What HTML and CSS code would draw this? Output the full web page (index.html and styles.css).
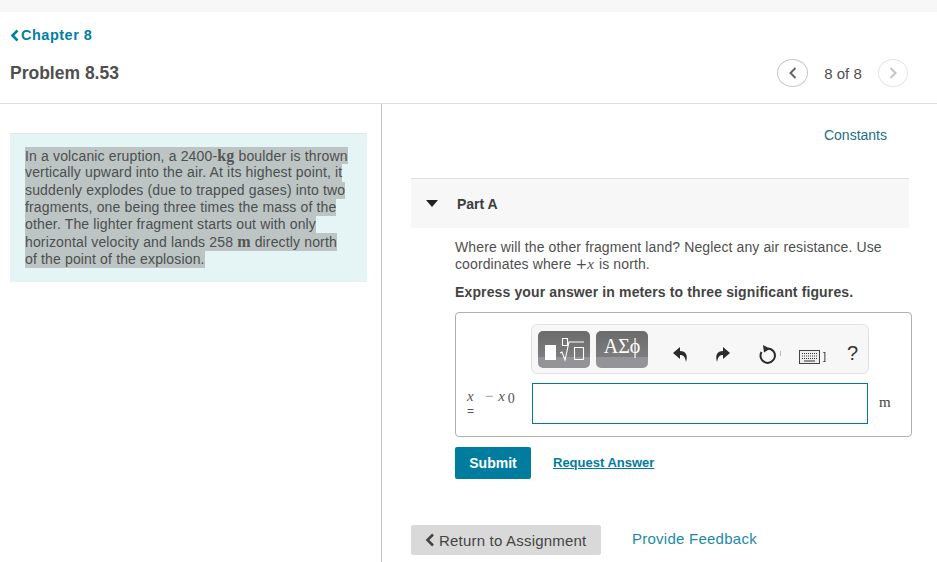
FILE: index.html
```html
<!DOCTYPE html>
<html lang="en">
<head>
<meta charset="utf-8">
<title>Problem 8.53</title>
<link rel="stylesheet" href="styles.css">
</head>
<body>
<div class="topstrip"></div>
<header class="header">
  <a class="chapter"><svg class="chev" width="9" height="13" viewBox="0 0 9 13"><path d="M7.5 1.500 2.500 6.500l5 5" fill="none" stroke="#00809f" stroke-width="2.600"/></svg>Chapter 8</a>
  <div class="titlerow">
    <h1 class="title">Problem 8.53</h1>
    <div class="pager">
      <span class="circle"><svg width="12" height="14" viewBox="0 0 12 14"><path d="M8.500 2 3.500 7l5 5" fill="none" stroke="#666" stroke-width="2"/></svg></span>
      <span class="pagetext">8 of 8</span>
      <span class="circle off"><svg width="12" height="14" viewBox="0 0 12 14"><path d="M3.500 2l5 5-5 5" fill="none" stroke="#c4c4c4" stroke-width="2"/></svg></span>
    </div>
  </div>
</header>
<main class="main">
  <section class="left">
    <div class="problem">
      <span class="hl">In a volcanic eruption, a 2400-<span class="unit">kg</span> boulder is thrown</span>
      <span class="hl">vertically upward into the air. At its highest point, it</span>
      <span class="hl">suddenly explodes (due to trapped gases) into two</span>
      <span class="hl">fragments, one being three times the mass of the</span>
      <span class="hl">other. The lighter fragment starts out with only</span>
      <span class="hl">horizontal velocity and lands 258 <span class="unit">m</span> directly north</span>
      <span class="hl">of the point of the explosion.</span>
    </div>
  </section>
  <section class="right">
    <div class="constants"><a>Constants</a></div>
    <div class="parthead">
      <svg class="tri" width="12" height="7" viewBox="0 0 12 7"><path d="M0 0h12L6 7z" fill="#222"/></svg>
      <span class="partname">Part A</span>
    </div>
    <div class="partbody">
      <p class="question">Where will the other fragment land? Neglect any air resistance. Use<br>coordinates where <span class="plusx"><span class="plus">+</span><span class="math">x</span></span> is north.</p>
      <p class="express">Express your answer in meters to three significant figures.</p>
      <div class="answerbox">
        <div class="toolbar">
          <span class="tbtn wide">
            <svg width="52" height="37" viewBox="0 0 52 37"><rect x="7" y="14" width="11" height="15" fill="#fff"/><path d="M24.500 7.500h5v7h-5zM22 22l2-1 3 8 4-18h15M36.500 16.500h9v12h-9z" fill="none" stroke="#fff" stroke-width="1.100"/></svg>
          </span>
          <span class="tbtn greek">ΑΣϕ</span>
          <svg class="ico undo" width="16" height="17" viewBox="0 0 16 17"><path d="M7 1 0 7l7 6V9c3 0 5 1 6 7 2-7 0-11-6-11z" fill="#2b2b2b"/></svg>
          <svg class="ico redo" width="16" height="17" viewBox="0 0 16 17"><path d="M9 1l7 6-7 6V9c-3 0-5 1-6 7-2-7 0-11 6-11z" fill="#2b2b2b"/></svg>
          <svg class="ico reset" width="20" height="20" viewBox="0 0 20 20"><path d="M11 3.500a7.200 7.200 0 1 1-6.500 3.600" fill="none" stroke="#2b2b2b" stroke-width="2"/><path d="M6 0l7 3.700-6 3.800z" fill="#2b2b2b"/></svg>
          <span class="tick"></span>
          <svg class="ico kbd" width="21" height="14" viewBox="0 0 21 14"><rect x=".5" y=".5" width="20" height="13" fill="#eee" stroke="#444"/><path d="M3 3.500h15M3 6h15M3 8.500h15" stroke="#333" stroke-dasharray="1 1"/><path d="M5 11h11" stroke="#333"/></svg>
          <span class="bracket">]</span>
          <span class="help">?</span>
        </div>
        <div class="inputrow">
          <div class="label"><span class="expr"><span class="math">x</span><span class="minus">−</span><span class="math">x</span><sub>0</sub></span><span class="eq">=</span></div>
          <div class="input"></div>
          <span class="inunit">m</span>
        </div>
      </div>
      <div class="actions">
        <button class="submit">Submit</button>
        <a class="request">Request Answer</a>
      </div>
    </div>
    <div class="footer">
      <button class="return"><svg width="10" height="14" viewBox="0 0 10 14"><path d="M8 1.500 2.500 7 8 12.500" fill="none" stroke="#444" stroke-width="2.600"/></svg>Return to Assignment</button>
      <a class="feedback">Provide Feedback</a>
    </div>
  </section>
</main>
</body>
</html>
```
FILE: styles.css
```css
* { box-sizing: border-box; }
html, body { margin: 0; padding: 0; }
body {
  width: 937px;
  height: 562px;
  overflow: hidden;
  background: #fff;
  font-family: "Liberation Sans", Arial, sans-serif;
  color: #4a4a4a;
}
p, h1 { margin: 0; }
.topstrip { height: 12px; background: #f7f7f7; }
.header {
  height: 92px;
  padding: 14px 29px 0 10px;
  border-bottom: 1px solid #dedede;
}
.chapter {
  display: flex;
  align-items: center;
  gap: 2px;
  height: 18px;
  font-size: 14.5px;
  font-weight: bold;
  letter-spacing: .5px;
  color: #00809f;
}
.titlerow {
  display: flex;
  justify-content: space-between;
  align-items: center;
  margin-top: 15px;
  height: 28px;
}
.title { font-size: 17.5px; font-weight: bold; color: #4f4f4f; }
.pager { display: flex; align-items: center; }
.circle {
  display: flex;
  align-items: center;
  justify-content: center;
  width: 31px;
  height: 28px;
  border: 1px solid #c8c8c8;
  border-radius: 50%;
}
.circle.off { width: 30px; border-color: #e6e6e6; }
.pagetext { font-size: 15px; width: 70px; text-align: center; color: #4f4f4f; }
.main { display: flex; height: 458px; }
.left {
  flex: none;
  width: 382px;
  padding: 29px 14px 0 10px;
  border-right: 1px solid #c9c9c9;
}
.problem {
  height: 149px;
  padding: 13px 14px 0 15px;
  background: #e5f5f6;
  border-top: 1px solid #dfe8e8;
  font-size: 14px;
  line-height: 17.3px;
  letter-spacing: .15px;
  color: #4c4f4f;
}
.hl {
  display: block;
  width: fit-content;
  height: 17.3px;
  white-space: nowrap;
  background: #bcc4c4;
}
.unit { font-family: "Liberation Serif", serif; font-size: 16px; font-weight: bold; color: #555; }
.right { flex: 1; min-width: 0; padding: 0 28px 0 29px; }
.constants {
  height: 74px;
  padding: 23px 22px 0 0;
  text-align: right;
  font-size: 14px;
  color: #1d6f87;
}
.parthead {
  display: flex;
  align-items: center;
  height: 50px;
  background: #f7f7f7;
  border-top: 1px solid #e0e0e0;
}
.tri { margin-left: 15px; }
.partname { margin-left: 19px; font-size: 14px; font-weight: bold; color: #3d3d3d; }
.partbody { padding: 11px 0 0 44px; margin-right: -3px; }
.question { font-size: 14px; line-height: 17px; letter-spacing: .12px; color: #4f4f4f; white-space: nowrap; }
.math { font-family: "Liberation Serif", serif; font-style: italic; font-size: 15px; letter-spacing: 1px; }
.plusx { display: inline-flex; align-items: baseline; line-height: 0; }
.plus { font-family: "DejaVu Serif", serif; font-size: 14px; }
.express {
  margin-top: 11px;
  font-size: 14px;
  line-height: 17px;
  font-weight: bold;
  letter-spacing: .13px;
  color: #444;
}
.answerbox {
  height: 125px;
  margin-top: 11px;
  padding: 11px 0 0 75px;
  border: 1px solid #b0b0b0;
  border-radius: 4px;
}
.toolbar {
  display: flex;
  align-items: center;
  width: 338px;
  height: 50px;
  padding: 0 6px;
  background: #f7f7f7;
  border: 1px solid #e2e2e2;
  border-radius: 6px;
}
.tbtn {
  display: flex;
  align-items: flex-start;
  height: 37px;
  border-radius: 5px;
  background: linear-gradient(#6b6b6b 0, #7d7d7d 70%, #939398 70%, #939398 100%);
  color: #fff;
}
.wide { width: 52px; margin-right: 6px; }
.greek {
  width: 52px;
  padding-top: 4px;
  justify-content: center;
  font-family: "Liberation Serif", serif;
  font-size: 20px;
}
.ico { flex: none; }
.undo { margin-left: 25px; margin-top: 11px; }
.redo { margin-left: 25px; margin-top: 11px; }
.reset { margin-left: 27px; margin-top: 12px; }
.tick { width: 1px; height: 5px; margin: 8px 0 0 3px; background: #bbb; }
.kbd { margin-left: 18px; margin-top: 16px; }
.bracket { margin-left: 3px; margin-top: 14px; font-size: 11px; color: #333; }
.help { margin-left: 21px; margin-top: 9px; font-size: 20px; color: #333; }
.inputrow { display: flex; align-items: flex-start; margin-top: 9px; }
.label {
  display: flex;
  flex-direction: column;
  flex: none;
  width: 77px;
  margin-left: -76px;
  padding: 5px 0 0 12px;
  font-size: 14px;
  line-height: 17px;
  color: #555;
  white-space: nowrap;
}
.expr { display: flex; align-items: baseline; height: 17px; }
.minus { margin: 0 5px 0 10px; font-family: "Liberation Serif", serif; color: #888; font-size: 15px; }
.label sub { font-family: "Liberation Serif", serif; font-size: 14px; line-height: 0; position: relative; top: 2px; vertical-align: baseline; margin-left: 2px; }
.eq { font-size: 12px; line-height: 13px; }
.input {
  flex: none;
  width: 336px;
  height: 41px;
  background: #fff;
  border: 1px solid #00799b;
}
.inunit {
  margin-left: 11px;
  padding-top: 11px;
  font-family: "Liberation Serif", serif;
  font-size: 15px;
  color: #444;
}
.actions { display: flex; align-items: center; margin-top: 10px; }
.submit {
  width: 76px;
  height: 32px;
  padding: 0;
  border: 0;
  border-radius: 2px;
  background: #007c9f;
  color: #fff;
  font: bold 14px "Liberation Sans", sans-serif;
}
.request {
  margin-left: 22px;
  padding-bottom: 2px;
  font-size: 13px;
  font-weight: bold;
  color: #007c9f;
  text-decoration: underline;
}
.footer { display: flex; align-items: center; margin-top: 46px; }
.return {
  display: flex;
  align-items: center;
  gap: 4px;
  width: 190px;
  height: 30px;
  padding: 0 0 0 14px;
  border: 0;
  border-radius: 2px;
  background: #d9d9d9;
  color: #444;
  font: 15px "Liberation Sans", sans-serif;
  letter-spacing: .2px;
}
.feedback { margin-left: 31px; padding-bottom: 3px; font-size: 15px; letter-spacing: .25px; color: #1a8aa8; }
```
